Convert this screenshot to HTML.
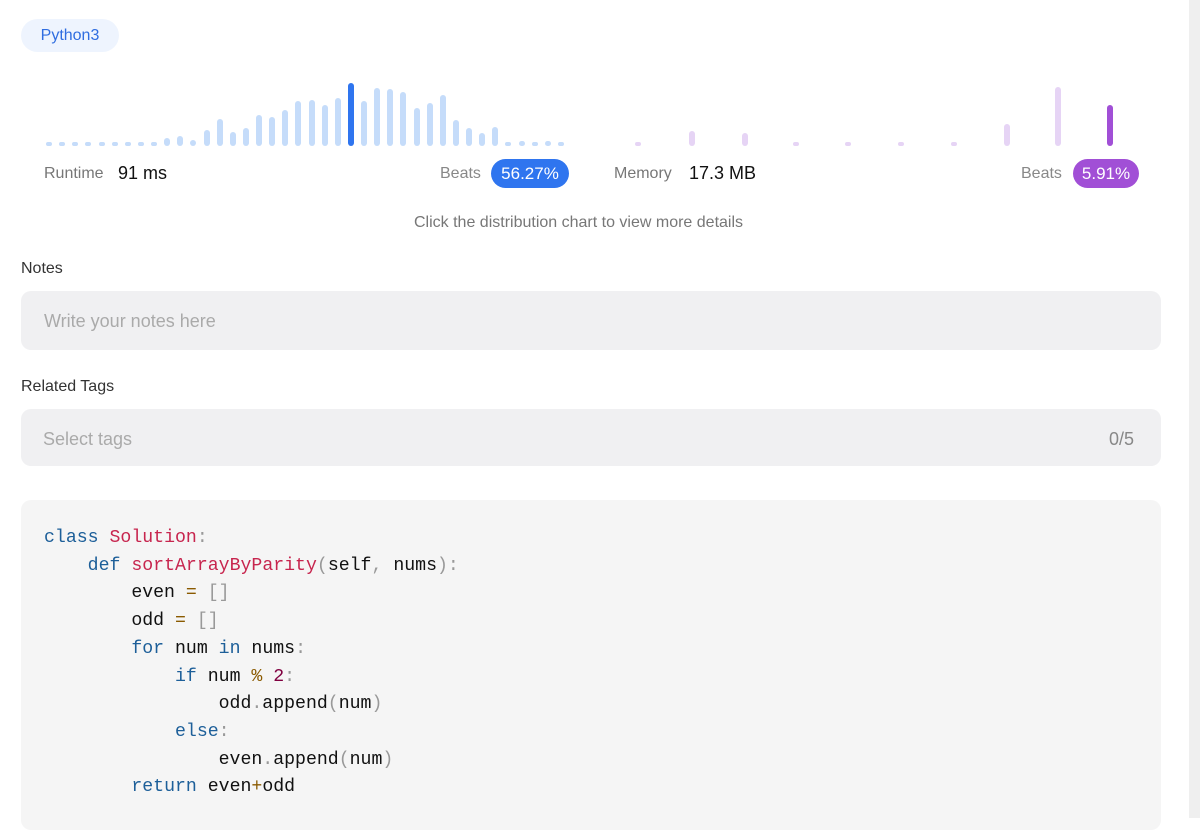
<!DOCTYPE html>
<html><head><meta charset="utf-8"><style>
*{margin:0;padding:0;box-sizing:border-box}
body{width:1200px;height:818px;background:#fff;font-family:"Liberation Sans",sans-serif;position:relative;overflow:hidden}
.a{position:absolute;white-space:nowrap}
.b{position:absolute;width:6px;border-radius:3px;bottom:672px;background:#c5dcfa}
.p{position:absolute;width:6px;border-radius:3px;bottom:672px;background:#e6d4f5}
.code{font-family:"Liberation Mono",monospace;font-size:18.2px;line-height:27.7px;color:#111;white-space:pre}
.k{color:#1d5f99}.f{color:#c7254e}.g{color:#999}.o{color:#8a5a00}.n{color:#800040}
</style></head><body>
<div class="a" style="left:21px;top:19px;width:98px;height:33px;border-radius:17px;background:#eef4fe;color:#2f6de0;font-size:16px;line-height:33px;text-align:center">Python3</div>
<div class="a" style="left:44px;top:165px;font-size:16px;color:#777">Runtime</div>
<div class="a" style="left:118px;top:163px;font-size:18px;color:#111">91 ms</div>
<div class="a" style="left:440px;top:165px;font-size:16px;color:#888">Beats</div>
<div class="a" style="left:491px;top:159px;width:78px;height:29px;border-radius:15px;background:#2f75ef;color:#fff;font-size:17px;line-height:29px;text-align:center">56.27%</div>
<div class="a" style="left:614px;top:165px;font-size:16px;color:#777">Memory</div>
<div class="a" style="left:689px;top:163px;font-size:18px;color:#111">17.3 MB</div>
<div class="a" style="left:1021px;top:165px;font-size:16px;color:#888">Beats</div>
<div class="a" style="left:1073px;top:159px;width:66px;height:29px;border-radius:15px;background:#a14fd6;color:#fff;font-size:17px;line-height:29px;text-align:center">5.91%</div>
<div class="a" style="left:414px;top:214px;font-size:16px;color:#777">Click the distribution chart to view more details</div>
<div class="a" style="left:21px;top:260px;font-size:16px;color:#333">Notes</div>
<div class="a" style="left:21px;top:291px;width:1140px;height:59px;border-radius:10px;background:#f0f0f2"></div>
<div class="a" style="left:44px;top:311px;font-size:18px;color:#aaa">Write your notes here</div>
<div class="a" style="left:21px;top:378px;font-size:16px;color:#333">Related Tags</div>
<div class="a" style="left:21px;top:409px;width:1140px;height:57px;border-radius:10px;background:#f0f0f2"></div>
<div class="a" style="left:43px;top:429px;font-size:18px;color:#aaa">Select tags</div>
<div class="a" style="left:1109px;top:429px;font-size:18px;color:#888">0/5</div>
<div class="a" style="left:21px;top:500px;width:1140px;height:330px;border-radius:10px;background:#f5f5f5"></div>
<pre class="a code" style="left:44px;top:525px;white-space:pre"><span class="k">class</span> <span class="f">Solution</span><span class="g">:</span>
    <span class="k">def</span> <span class="f">sortArrayByParity</span><span class="g">(</span>self<span class="g">,</span> nums<span class="g">):</span>
        even <span class="o">=</span> <span class="g">[]</span>
        odd <span class="o">=</span> <span class="g">[]</span>
        <span class="k">for</span> num <span class="k">in</span> nums<span class="g">:</span>
            <span class="k">if</span> num <span class="o">%</span> <span class="n">2</span><span class="g">:</span>
                odd<span class="g">.</span>append<span class="g">(</span>num<span class="g">)</span>
            <span class="k">else</span><span class="g">:</span>
                even<span class="g">.</span>append<span class="g">(</span>num<span class="g">)</span>
        <span class="k">return</span> even<span class="o">+</span>odd</pre>
<div class="a" style="left:1189px;top:0;width:11px;height:818px;background:#efefef"></div>
<div class="b" style="left:46px;height:4px"></div><div class="b" style="left:59px;height:4px"></div><div class="b" style="left:72px;height:4px"></div><div class="b" style="left:85px;height:4px"></div><div class="b" style="left:99px;height:4px"></div><div class="b" style="left:112px;height:4px"></div><div class="b" style="left:125px;height:4px"></div><div class="b" style="left:138px;height:4px"></div><div class="b" style="left:151px;height:4px"></div><div class="b" style="left:164px;height:8px"></div><div class="b" style="left:177px;height:10px"></div><div class="b" style="left:190px;height:6px"></div><div class="b" style="left:204px;height:16px"></div><div class="b" style="left:217px;height:27px"></div><div class="b" style="left:230px;height:14px"></div><div class="b" style="left:243px;height:18px"></div><div class="b" style="left:256px;height:31px"></div><div class="b" style="left:269px;height:29px"></div><div class="b" style="left:282px;height:36px"></div><div class="b" style="left:295px;height:45px"></div><div class="b" style="left:309px;height:46px"></div><div class="b" style="left:322px;height:41px"></div><div class="b" style="left:335px;height:48px"></div><div class="b" style="left:348px;height:63px;background:#2f75ef"></div><div class="b" style="left:361px;height:45px"></div><div class="b" style="left:374px;height:58px"></div><div class="b" style="left:387px;height:57px"></div><div class="b" style="left:400px;height:54px"></div><div class="b" style="left:414px;height:38px"></div><div class="b" style="left:427px;height:43px"></div><div class="b" style="left:440px;height:51px"></div><div class="b" style="left:453px;height:26px"></div><div class="b" style="left:466px;height:18px"></div><div class="b" style="left:479px;height:13px"></div><div class="b" style="left:492px;height:19px"></div><div class="b" style="left:505px;height:4px"></div><div class="b" style="left:519px;height:5px"></div><div class="b" style="left:532px;height:4px"></div><div class="b" style="left:545px;height:5px"></div><div class="b" style="left:558px;height:4px"></div>
<div class="p" style="left:635px;height:4px"></div><div class="p" style="left:689px;height:15px"></div><div class="p" style="left:742px;height:13px"></div><div class="p" style="left:793px;height:4px"></div><div class="p" style="left:845px;height:4px"></div><div class="p" style="left:898px;height:4px"></div><div class="p" style="left:951px;height:4px"></div><div class="p" style="left:1004px;height:22px"></div><div class="p" style="left:1055px;height:59px"></div><div class="p" style="left:1107px;height:41px;background:#a14fd6"></div>
</body></html>
